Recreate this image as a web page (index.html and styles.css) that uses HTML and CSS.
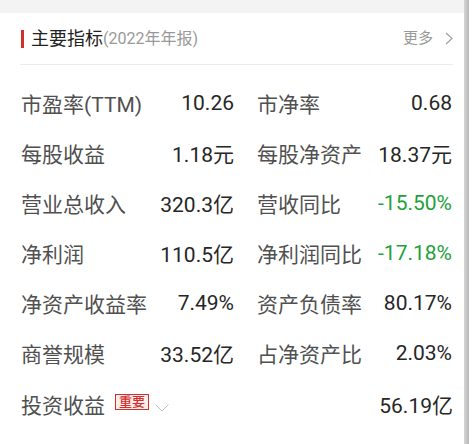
FILE: index.html
```html
<!DOCTYPE html>
<html lang="zh">
<head>
<meta charset="utf-8">
<link rel="stylesheet" href="styles.css">
</head>
<body>
<div class="page">
  <div class="main">
    <div class="topband"></div>
    <div class="header">
      <span class="mark"></span>
      <span class="title">主要指标</span><span class="sub">(2022年年报)</span>
      <span class="more">更多<svg class="chev" width="8" height="13" viewBox="0 0 8 13"><path d="M1 1 L7 6.5 L1 12" fill="none" stroke="#a0a0a0" stroke-width="1.2"/></svg></span>
    </div>
    <div class="divider"></div>
    <div class="grid">
      <div class="cell"><span class="lab">市盈率(TTM)</span><span class="val">10.26</span></div>
      <div class="cell"><span class="lab">市净率</span><span class="val">0.68</span></div>
      <div class="cell"><span class="lab">每股收益</span><span class="val">1.18元</span></div>
      <div class="cell"><span class="lab">每股净资产</span><span class="val">18.37元</span></div>
      <div class="cell"><span class="lab">营业总收入</span><span class="val">320.3亿</span></div>
      <div class="cell"><span class="lab">营收同比</span><span class="val green">-15.50%</span></div>
      <div class="cell"><span class="lab">净利润</span><span class="val">110.5亿</span></div>
      <div class="cell"><span class="lab">净利润同比</span><span class="val green">-17.18%</span></div>
      <div class="cell"><span class="lab">净资产收益率</span><span class="val">7.49%</span></div>
      <div class="cell"><span class="lab">资产负债率</span><span class="val">80.17%</span></div>
      <div class="cell"><span class="lab">商誉规模</span><span class="val">33.52亿</span></div>
      <div class="cell"><span class="lab">占净资产比</span><span class="val">2.03%</span></div>
      <div class="cell wide">
        <span class="labgroup"><span class="lab">投资收益</span><span class="badge">重要</span><svg class="down" width="14" height="8" viewBox="0 0 14 8"><path d="M0.5 0.5 L7 7 L13.5 0.5" fill="none" stroke="#c0c0c0" stroke-width="1"/></svg></span>
        <span class="val">56.19亿</span>
      </div>
    </div>
  </div>
  <div class="scrollbar"></div>
</div>
</body>
</html>
```
FILE: styles.css
```css
html, body {
  margin: 0;
  padding: 0;
  background: #ffffff;
}
body {
  font-family: Roboto, "Noto Sans CJK SC", sans-serif;
  width: 474px;
  height: 444px;
  overflow: hidden;
}
.page {
  display: flex;
  height: 444px;
}
.main {
  width: 464px;
  display: flex;
  flex-direction: column;
}
.scrollbar {
  width: 5px;
  height: 444px;
  background: linear-gradient(to right, #d6d6d6, #c4c4c4 60%, #b8b8b8);
}
.topband {
  height: 13px;
  background: #f3f3f3;
}
.header {
  height: 51px;
  display: flex;
  align-items: center;
  padding-left: 21px;
  padding-right: 11px;
}
.mark {
  width: 3px;
  height: 18px;
  background: #d2302c;
  margin-right: 7px;
}
.title {
  font-size: 18px;
  color: #222;
  line-height: 1;
}
.sub {
  font-size: 16px;
  color: #999;
  line-height: 1;
}
.more {
  margin-left: auto;
  font-size: 15px;
  color: #9a9a9a;
  display: flex;
  align-items: center;
  line-height: 1;
}
.chev {
  margin-left: 12px;
}
.divider {
  height: 1px;
  background: #ececec;
  margin: 0 11px 0 20px;
}
.grid {
  display: grid;
  grid-template-columns: 213px 1fr;
  column-gap: 23px;
  grid-auto-rows: 50px;
  padding: 13px 12px 0 21px;
}
.cell {
  display: flex;
  align-items: center;
  justify-content: space-between;
  white-space: nowrap;
}
.wide {
  grid-column: 1 / span 2;
  margin-top: 2px;
  margin-right: -1px;
}
.lab {
  font-size: 21px;
  color: #505050;
}
.val {
  font-size: 21px;
  color: #262626;
}
.green {
  color: #23a03a;
}
.labgroup {
  display: flex;
  align-items: center;
}
.badge {
  margin-left: 10px;
  border: 1px solid #d2302c;
  background: #fcecec;
  color: #d2302c;
  font-size: 13px;
  line-height: 14px;
  font-weight: 500;
  padding: 0 3px;
  margin-top: -5px;
}
.down {
  margin-left: 6px;
  margin-top: 8px;
}
```
